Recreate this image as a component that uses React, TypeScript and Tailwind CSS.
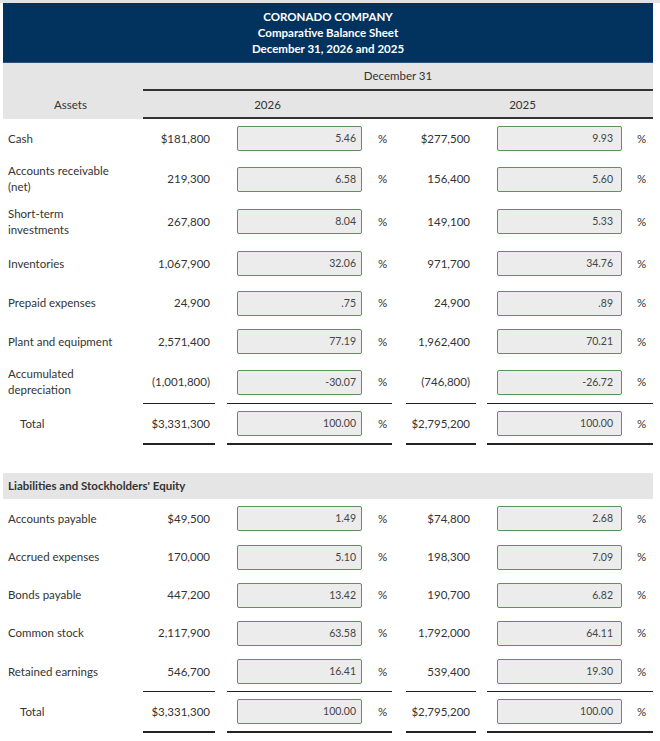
import React from 'react';

type Line = {
  label: string[];
  a1: string;
  p1: string;
  a2: string;
  p2: string;
  h: string;
  total?: boolean;
};

const assets: Line[] = [
  { label: ['Cash'], a1: '$181,800', p1: '5.46', a2: '$277,500', p2: '9.93', h: 'h-[39px]' },
  { label: ['Accounts receivable', '(net)'], a1: '219,300', p1: '6.58', a2: '156,400', p2: '5.60', h: 'h-[42px]' },
  { label: ['Short-term', 'investments'], a1: '267,800', p1: '8.04', a2: '149,100', p2: '5.33', h: 'h-[43px]' },
  { label: ['Inventories'], a1: '1,067,900', p1: '32.06', a2: '971,700', p2: '34.76', h: 'h-[41px]' },
  { label: ['Prepaid expenses'], a1: '24,900', p1: '.75', a2: '24,900', p2: '.89', h: 'h-[38px]' },
  { label: ['Plant and equipment'], a1: '2,571,400', p1: '77.19', a2: '1,962,400', p2: '70.21', h: 'h-[39px]' },
  { label: ['Accumulated', 'depreciation'], a1: '(1,001,800)', p1: '-30.07', a2: '(746,800)', p2: '-26.72', h: 'h-[42px]' },
  { label: ['Total'], a1: '$3,331,300', p1: '100.00', a2: '$2,795,200', p2: '100.00', h: 'h-[42px]', total: true },
];

const liabilities: Line[] = [
  { label: ['Accounts payable'], a1: '$49,500', p1: '1.49', a2: '$74,800', p2: '2.68', h: 'h-[39px]' },
  { label: ['Accrued expenses'], a1: '170,000', p1: '5.10', a2: '198,300', p2: '7.09', h: 'h-[38px]' },
  { label: ['Bonds payable'], a1: '447,200', p1: '13.42', a2: '190,700', p2: '6.82', h: 'h-[38px]' },
  { label: ['Common stock'], a1: '2,117,900', p1: '63.58', a2: '1,792,000', p2: '64.11', h: 'h-[38px]' },
  { label: ['Retained earnings'], a1: '546,700', p1: '16.41', a2: '539,400', p2: '19.30', h: 'h-[39px]' },
  { label: ['Total'], a1: '$3,331,300', p1: '100.00', a2: '$2,795,200', p2: '100.00', h: 'h-[42px]', total: true },
];

const PctBox = ({ value, pr }: { value: string; pr: string }) => (
  <div
    className={`flex h-[25px] w-[125px] items-center justify-end rounded-[2px] border border-[#5f915f] bg-[#ececec] pt-[1px] text-[10.5px] text-[#444] ${pr}`}
  >
    {value}
  </div>
);

const Row = ({ line }: { line: Line }) => {
  const rule = line.total ? 'border-t border-b-2 border-[#222]' : '';
  return (
    <div className={`flex ${line.h}`}>
      <div className={`flex w-[140px] flex-col justify-center leading-[16px] ${line.total ? 'pl-[17px]' : 'pl-[5px]'}`}>
        {line.label.map((t) => (
          <span key={t}>{t}</span>
        ))}
      </div>
      <div className={`flex w-[72px] items-center justify-end pr-[5px] ${rule}`}>{line.a1}</div>
      <div className="w-[12px]" />
      <div className={`flex w-[165px] items-center pl-[10px] ${rule}`}>
        <PctBox value={line.p1} pr="pr-[5px]" />
        <span className="ml-[16px]">%</span>
      </div>
      <div className="w-[14px]" />
      <div className={`flex w-[70px] items-center justify-end pr-[6px] ${rule}`}>{line.a2}</div>
      <div className="w-[11px]" />
      <div className={`flex w-[166px] items-center pl-[10px] ${rule}`}>
        <PctBox value={line.p2} pr="pr-[8px]" />
        <span className="ml-[15px]">%</span>
      </div>
    </div>
  );
};

export default function App() {
  return (
    <div className="min-h-[741px] w-[660px] bg-white text-[11.5px] text-[#333]" style={{ fontFamily: 'Lato, "Liberation Sans", sans-serif' }}>
      <div className="h-[3px] bg-[#e2e2e2]" />
      <div className="ml-[3px] w-[650px]">
        {/* title */}
        <div className="flex h-[60px] flex-col items-center justify-center border-b border-[#2c5282] bg-[#02335f] text-[11.5px] font-bold leading-[16px] text-white">
          <span>CORONADO COMPANY</span>
          <span>Comparative Balance Sheet</span>
          <span>December 31, 2026 and 2025</span>
        </div>

        {/* column heads */}
        <div className="flex h-[56px] bg-[#e5e5e5]">
          <div className="flex w-[140px] items-end justify-center pb-[6px] pr-[5px]">Assets</div>
          <div className="flex flex-1 flex-col">
            <div className="flex h-[28px] items-center justify-center border-b-2 border-[#333]">December 31</div>
            <div className="flex flex-1 border-b-2 border-[#333]">
              <div className="flex w-[249px] items-center justify-center pt-[1px]">2026</div>
              <div className="flex flex-1 items-center justify-center pt-[1px]">2025</div>
            </div>
          </div>
        </div>

        {assets.map((l) => (
          <Row key={l.label.join(' ') + l.a1} line={l} />
        ))}

        <div className="mt-[28px] flex h-[26px] items-center bg-[#e5e5e5] pl-[5px] font-bold">
          Liabilities and Stockholders' Equity
        </div>

        {liabilities.map((l) => (
          <Row key={l.label.join(' ') + l.a1} line={l} />
        ))}
      </div>
    </div>
  );
}
